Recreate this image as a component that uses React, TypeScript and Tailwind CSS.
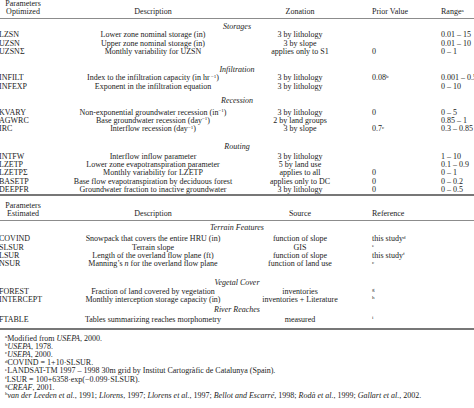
import type { ReactNode } from 'react';

type Row = { p: ReactNode; d: ReactNode; z?: ReactNode; v?: ReactNode; r?: ReactNode };
type Section = { label: string; mt: string; gap: string; rows: Row[] };

const COLS = 'grid grid-cols-[70px_166px_128px_77px_1fr]';

function Sup({ children }: { children: ReactNode }) {
  return <sup className="text-[5px] top-[-0.55em]">{children}</sup>;
}

const optimized: Section[] = [
  {
    label: 'Storages',
    mt: 'mt-[4px]',
    gap: 'mt-0',
    rows: [
      { p: 'LZSN', d: 'Lower zone nominal storage (in)', z: '3 by lithology', r: '0.01 – 15' },
      { p: 'UZSN', d: 'Upper zone nominal storage (in)', z: '3 by slope', r: '0.01 – 10' },
      { p: 'UZSNΣ', d: 'Monthly variability for UZSN', z: 'applies only to S1', v: '0', r: '0 – 1' },
    ],
  },
  {
    label: 'Infiltration',
    mt: 'mt-[9.5px]',
    gap: 'mt-[0.5px]',
    rows: [
      {
        p: 'INFILT',
        d: <>Index to the infiltration capacity (in hr<Sup> −1</Sup>)</>,
        z: '3 by lithology',
        v: <>0.08<Sup>b</Sup></>,
        r: '0.001 – 0.5',
      },
      { p: 'INFEXP', d: 'Exponent in the infiltration equation', z: '3 by lithology', r: '0 – 10' },
    ],
  },
  {
    label: 'Recession',
    mt: 'mt-[5.6px]',
    gap: 'mt-[3.7px]',
    rows: [
      { p: 'KVARY', d: <>Non-exponential groundwater recession (in<Sup>−1</Sup>)</>, z: '3 by lithology', v: '0', r: '0 – 5' },
      { p: 'AGWRC', d: <>Base groundwater recession (day<Sup>−1</Sup>)</>, z: '2 by land groups', r: '0.85 – 1' },
      { p: 'IRC', d: <>Interflow recession (day<Sup>−1</Sup>)</>, z: '3 by slope', v: <>0.7<Sup>c</Sup></>, r: '0.3 – 0.85' },
    ],
  },
  {
    label: 'Routing',
    mt: 'mt-[9.1px]',
    gap: 'mt-[1.7px]',
    rows: [
      { p: 'INTFW', d: 'Interflow inflow parameter', z: '3 by lithology', r: '1 – 10' },
      { p: 'LZETP', d: 'Lower zone evapotranspiration parameter', z: '5 by land use', r: '0.1 – 0.9' },
      { p: 'LZETPΣ', d: 'Monthly variability for LZETP', z: 'applies to all', v: '0', r: '0 – 1' },
      { p: 'BASETP', d: 'Base flow evapotranspiration by deciduous forest', z: 'applies only to DC', v: '0', r: '0 – 0.2' },
      { p: 'DEEPFR', d: 'Groundwater fraction to inactive groundwater', z: '3 by lithology', v: '0', r: '0 – 0.5' },
    ],
  },
];

const estimated: Section[] = [
  {
    label: 'Terrain Features',
    mt: 'mt-[2.4px]',
    gap: 'mt-[3.7px]',
    rows: [
      { p: 'COVIND', d: 'Snowpack that covers the entire HRU (in)', z: 'function of slope', v: <>this study<Sup>d</Sup></> },
      { p: 'SLSUR', d: 'Terrain slope', z: 'GIS', v: <Sup>e</Sup> },
      { p: 'LSUR', d: 'Length of the overland flow plane (ft)', z: 'function of slope', v: <>this study<Sup>f</Sup></> },
      { p: 'NSUR', d: <>Manning’s <i>n</i> for the overland flow plane</>, z: 'function of land use', v: <Sup>c</Sup> },
    ],
  },
  {
    label: 'Vegetal Cover',
    mt: 'mt-[10.8px]',
    gap: 'mt-0',
    rows: [
      { p: 'FOREST', d: 'Fraction of land covered by vegetation', z: 'inventories', v: <Sup>g</Sup> },
      { p: 'INTERCEPT', d: 'Monthly interception storage capacity (in)', z: 'inventories + Literature', v: <Sup>h</Sup> },
    ],
  },
  {
    label: 'River Reaches',
    mt: 'mt-[1.4px]',
    gap: 'mt-[1.7px]',
    rows: [{ p: 'FTABLE', d: 'Tables summarizing reaches morphometry', z: 'measured', v: <Sup>i</Sup> }],
  },
];

function DataRow({ row }: { row: Row }) {
  return (
    <div className={`${COLS} h-[8.3px] leading-[8.3px] whitespace-nowrap`}>
      <div className="-ml-px">{row.p}</div>
      <div className="text-center">{row.d}</div>
      <div className="text-center">{row.z}</div>
      <div className="pl-[8px]">{row.v}</div>
      <div>{row.r}</div>
    </div>
  );
}

function SectionBlock({ s }: { s: Section }) {
  return (
    <div className={s.mt}>
      <div className="h-[8.3px] leading-[8.3px] text-center italic whitespace-nowrap">{s.label}</div>
      <div className={s.gap}>
        {s.rows.map((r, i) => (
          <DataRow key={i} row={r} />
        ))}
      </div>
    </div>
  );
}

function Header({ second, cols, pad }: { second: string; cols: ReactNode[]; pad: string }) {
  return (
    <div className={`${COLS} ${pad} border-b border-[#8c8c8c] leading-[8.3px] whitespace-nowrap`}>
      <div className="w-[46px] text-center flex flex-col">
        <span>Parameters</span>
        <span>{second}</span>
      </div>
      <div className="text-center pt-[8.3px]">{cols[0]}</div>
      <div className="text-center pt-[8.3px]">{cols[1]}</div>
      <div className="pl-[8px] pt-[8.3px]">{cols[2]}</div>
      <div className="pt-[8.3px]">{cols[3]}</div>
    </div>
  );
}

const notes: ReactNode[] = [
  <>Modified from <i>USEPA</i>, 2000.</>,
  <><i>USEPA</i>, 1978.</>,
  <><i>USEPA</i>, 2000.</>,
  <>COVIND = 1+10·SLSUR.</>,
  <>LANDSAT-TM 1997 – 1998 30m grid by Institut Cartogràfic de Catalunya (Spain).</>,
  <>LSUR = 100+6358·exp(−0.099·SLSUR).</>,
  <><i>CREAF</i>, 2001.</>,
  <>
    <i>van der Leeden et al.</i>, 1991; <i>Llorens</i>, 1997; <i>Llorens et al.</i>, 1997; <i>Bellot and Escarré</i>, 1998;{' '}
    <i>Rodà et al.</i>, 1999; <i>Gallart et al.</i>, 2002.
  </>,
];

export default function App() {
  return (
    <div className="w-[474px] h-[408px] overflow-hidden bg-white text-[#222] text-[8px] font-['Liberation_Serif','Times_New_Roman',serif]">
      <Header
        second="Optimized"
        pad="h-[19px]"
        cols={['Description', 'Zonation', 'Prior Value', <>Range<Sup>a</Sup></>]}
      />
      {optimized.map((s) => (
        <SectionBlock key={s.label} s={s} />
      ))}
      <div className="h-[2px] bg-[#777]" />

      <Header second="Estimated" pad="h-[25px] pt-[6px]" cols={['Description', 'Source', 'Reference', '']} />
      {estimated.map((s) => (
        <SectionBlock key={s.label} s={s} />
      ))}
      <div className="mt-[4px] h-[2px] bg-[#777]" />

      <div className="mt-[4.7px] pl-[5px]">
        {notes.map((n, i) => (
          <div key={i} className="h-[8.2px] leading-[8.2px] whitespace-nowrap">
            <Sup>{'abcdefgh'[i]}</Sup>
            {n}
          </div>
        ))}
      </div>
    </div>
  );
}
